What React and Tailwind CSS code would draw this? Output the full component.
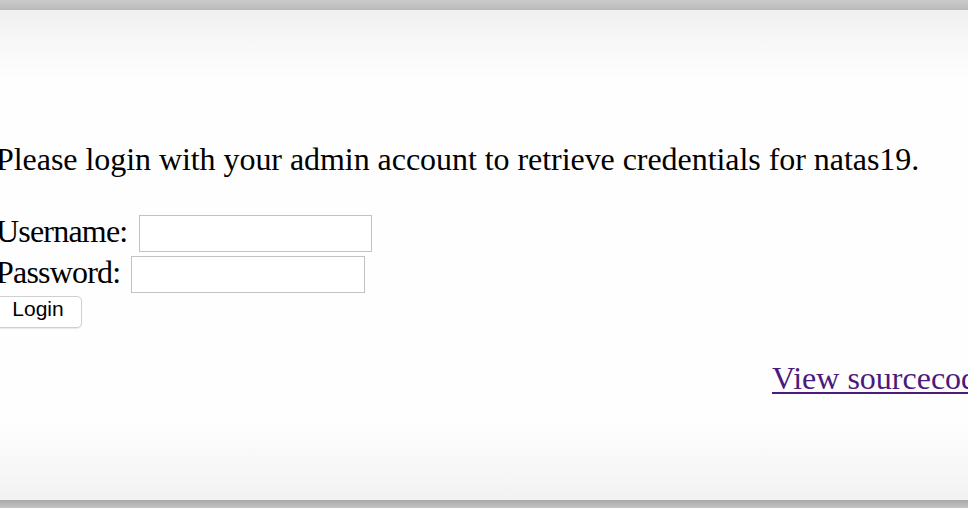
export default function App() {
  return (
    <div className="w-[968px] h-[508px] overflow-hidden flex flex-col bg-white">
      <div className="h-[10px] shrink-0 bg-[linear-gradient(to_bottom,#cbcbcb,#b9b9b9)]" />
      <div className="h-[490px] shrink-0 bg-[linear-gradient(to_bottom,#f0f0f0_0px,#f7f7f7_30px,#fefefe_70px,#fefefe_410px,#f7f7f7_460px,#f2f2f2_490px)] overflow-hidden">
        <div className="flex flex-col -ml-[4px] text-black text-[32px] font-['Liberation_Serif',serif]">
          <div className="mt-[131px] leading-[36px] whitespace-nowrap tracking-[-0.05px]">
            Please login with your admin account to retrieve credentials for natas19.
          </div>
          <div className="mt-[38px] flex items-start h-[37px]">
            <span className="leading-[32px] whitespace-nowrap tracking-[-0.8px]">Username:</span>
            <input type="text" className="ml-[12px] w-[233px] h-[37px] border border-[#c2c2c2] bg-white outline-none" />
          </div>
          <div className="mt-[4px] flex items-start h-[37px]">
            <span className="leading-[32px] whitespace-nowrap tracking-[-0.8px]">Password:</span>
            <input type="password" className="ml-[11px] w-[234px] h-[37px] border border-[#c2c2c2] bg-white outline-none" />
          </div>
          <div className="mt-[3px] flex">
            <button className="h-[32px] w-[88px] -ml-[2px] pb-[6px] rounded-[5px] border border-[#cfcfcf] bg-white text-[21px] leading-[24px] font-['Liberation_Sans',sans-serif] text-black shadow-[0_1px_1px_rgba(0,0,0,0.08)]">
              Login
            </button>
          </div>
          <div className="mt-[32px] pl-[776px] leading-[36px] whitespace-nowrap">
            <a href="#" className="text-[#4b1a7d] underline decoration-[2px] underline-offset-[3px]">View sourcecode</a>
          </div>
        </div>
      </div>
      <div className="h-[8px] shrink-0 bg-[linear-gradient(to_bottom,#a9a9a9,#c4c4c4)]" />
    </div>
  );
}
